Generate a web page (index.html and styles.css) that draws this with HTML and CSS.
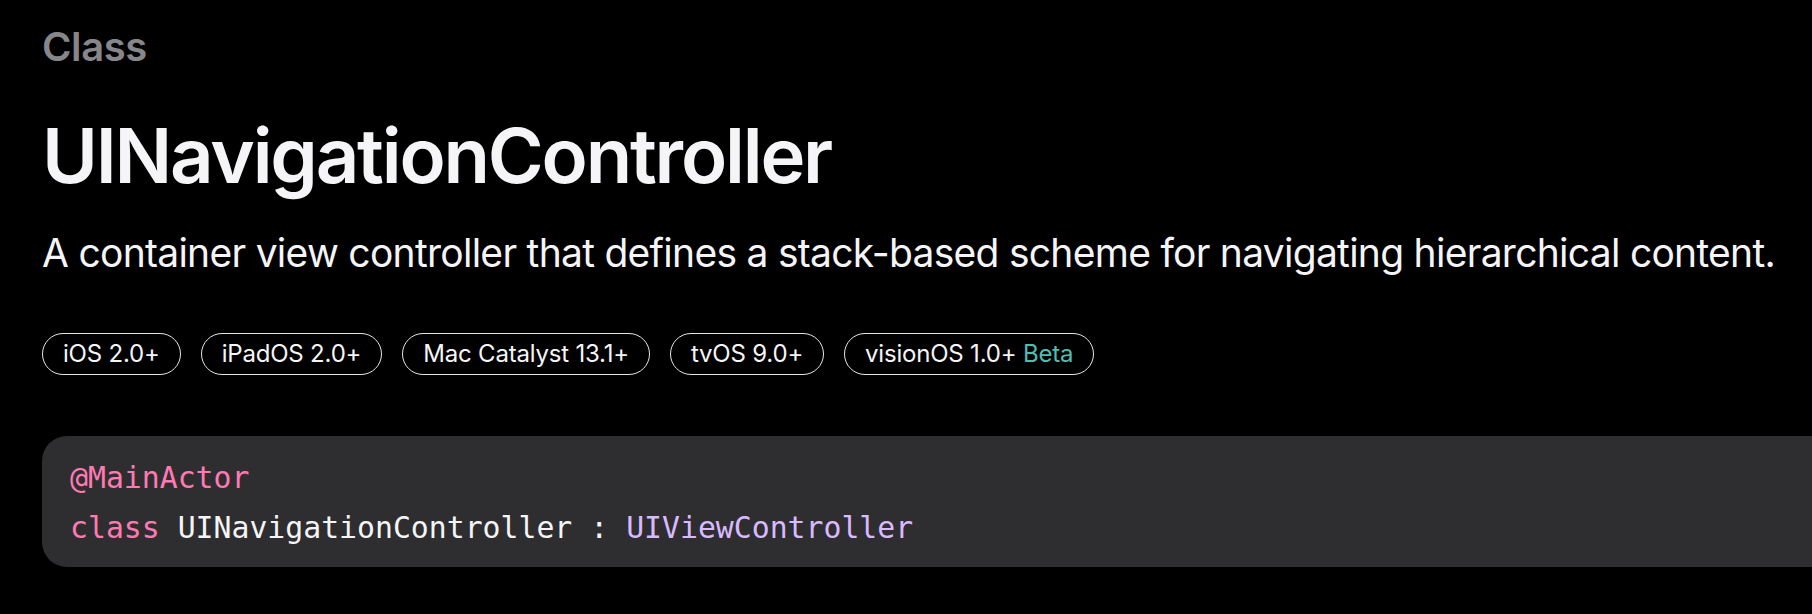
FILE: index.html
```html
<!DOCTYPE html>
<html lang="en">
<head>
<meta charset="utf-8">
<title>UINavigationController</title>
<link rel="stylesheet" href="styles.css">
</head>
<body>
<main class="page">
  <div class="eyebrow">Class</div>
  <h1 class="title">UINavigationController</h1>
  <p class="abstract">A container view controller that defines a stack-based scheme for navigating hierarchical content.</p>
  <ul class="badges">
    <li class="badge">iOS 2.0+</li>
    <li class="badge">iPadOS 2.0+</li>
    <li class="badge">Mac Catalyst 13.1+</li>
    <li class="badge">tvOS 9.0+</li>
    <li class="badge">visionOS 1.0+ <span class="beta">Beta</span></li>
  </ul>
  <pre class="code"><code><span class="kw">@MainActor</span>
<span class="kw">class</span> UINavigationController : <span class="type">UIViewController</span></code></pre>
</main>
</body>
</html>
```
FILE: styles.css
```css
html, body {
  margin: 0;
  padding: 0;
  background: #000;
  overflow: hidden;
}

.page {
  display: flex;
  flex-direction: column;
  align-items: flex-start;
  padding: 23px 0 0 42px;
  font-family: Inter, "Noto Sans", sans-serif;
  color: #f5f5f7;
}

.eyebrow {
  font-size: 40px;
  line-height: 48px;
  font-weight: 600;
  color: #86868b;
  letter-spacing: -0.4px;
}

.title {
  margin: 39px 0 0;
  font-size: 76px;
  line-height: 90px;
  font-weight: 600;
  letter-spacing: -2.2px;
  color: #f5f5f7;
}

.abstract {
  margin: 29px 0 0;
  font-size: 39px;
  line-height: 48px;
  font-weight: 400;
  letter-spacing: -0.72px;
  color: #f5f5f7;
  white-space: nowrap;
}

.badges {
  display: flex;
  gap: 20px;
  list-style: none;
  margin: 56px 0 0;
  padding: 0;
}

.badge {
  box-sizing: border-box;
  height: 42px;
  padding: 0 20px;
  border: 1.5px solid #e6e6e6;
  border-radius: 21px;
  font-size: 24px;
  line-height: 39px;
  color: #f5f5f7;
  letter-spacing: -0.2px;
  white-space: nowrap;
}

.beta {
  color: #4fbdb3;
}

.code {
  box-sizing: border-box;
  align-self: stretch;
  height: 131px;
  margin: 61px 0 0;
  padding: 17px 0 0 28px;
  background: #2e2e30;
  border-radius: 25px 0 0 25px;
  font-family: "DejaVu Sans Mono", "Liberation Mono", monospace;
  font-size: 29.8px;
  line-height: 50px;
  color: #f5f5f7;
  white-space: pre;
}

.code code {
  font-family: inherit;
}

.kw {
  color: #ff7ab2;
}

.type {
  color: #dabaff;
}
```
